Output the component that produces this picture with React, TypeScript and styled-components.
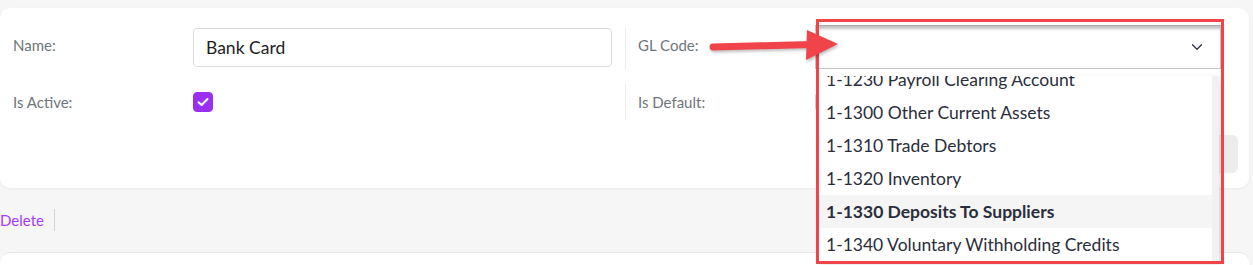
import React from 'react'
import styled, { createGlobalStyle } from 'styled-components'
import { ChevronDown } from 'lucide-react'

const GlobalStyle = createGlobalStyle`
  html, body {
    margin: 0;
    padding: 0;
    background: #f6f6f6;
    font-family: Lato, "Open Sans", Arial, sans-serif;
  }
`

const Page = styled.div`
  position: relative;
  width: 1253px;
  height: 265px;
  overflow: hidden;
  padding-top: 8px;
  box-sizing: border-box;
`

const Card = styled.div`
  width: 1249px;
  box-sizing: border-box;
  background: #fff;
  border-radius: 10px;
  box-shadow: 0 1px 3px rgba(0, 0, 0, 0.06);
  padding: 20px 0 15px;
  display: flex;
  flex-direction: column;
`

const FormGrid = styled.div`
  display: grid;
  grid-template-columns: 625px 1fr;
  grid-template-rows: 42px 36px;
  row-gap: 14px;
`

const Field = styled.div<{ $divider?: boolean; $center?: boolean }>`
  display: flex;
  align-items: ${(p) => (p.$center ? 'center' : 'flex-start')};
  padding-left: ${(p) => (p.$divider ? '12px' : '13px')};
  padding-right: 13px;
  border-left: ${(p) => (p.$divider ? '1px solid #ececec' : 'none')};
  position: relative;
`

const Label = styled.label`
  width: 180px;
  flex-shrink: 0;
  font-size: 15px;
  line-height: 34px;
  color: #6f757c;
`

const TextInput = styled.div`
  width: 419px;
  height: 39px;
  box-sizing: border-box;
  border: 1px solid #dcdcdc;
  border-radius: 4px;
  padding: 0 12px;
  display: flex;
  align-items: center;
  font-size: 17.5px;
  color: #1d1f24;
`

const Checkbox = styled.div<{ $checked?: boolean }>`
  width: 20px;
  height: 20px;
  border-radius: 4px;
  box-sizing: border-box;
  background: ${(p) => (p.$checked ? '#9a2ff0' : '#fff')};
  border: 1px solid ${(p) => (p.$checked ? '#9a2ff0' : '#cfcfcf')};
  display: flex;
  align-items: center;
  justify-content: center;
  margin-left: ${(p) => (p.$checked ? '0' : '-3px')};
`

const SelectWrap = styled.div`
  position: relative;
  width: 406px;
  margin-top: -3px;
  margin-left: -3px;
  z-index: 5;
`

const SelectBox = styled.div`
  height: 44px;
  box-sizing: border-box;
  background: #fff;
  border: 1px solid #c4c4c4;
  border-top-color: #a8a8a8;
  box-shadow: inset 0 5px 3px -2px rgba(0, 0, 0, 0.24);
  display: flex;
  align-items: center;
  justify-content: flex-end;
  padding-right: 14px;
  color: #2b3040;
`

const DropList = styled.div`
  position: absolute;
  top: calc(100% + 7px);
  left: 3px;
  right: 2px;
  height: 186px;
  background: #fff;
  overflow: hidden;
  display: flex;
  box-shadow: 2px 3px 6px rgba(0, 0, 0, 0.12);
`

const Items = styled.div`
  flex: 1;
  margin-top: -13px;
`

const ScrollTrack = styled.div`
  width: 7px;
  background: #f1f1f1;
`

const Item = styled.div<{ $active?: boolean }>`
  height: 33px;
  display: flex;
  align-items: center;
  padding-left: 8px;
  font-size: 17.5px;
  color: #2a2e3b;
  font-weight: ${(p) => (p.$active ? 700 : 400)};
  background: ${(p) => (p.$active ? '#f5f5f5' : '#fff')};
  white-space: nowrap;
`

const Footer = styled.div`
  display: flex;
  justify-content: flex-end;
  padding-right: 11px;
  margin-top: 15px;
`

const SaveButton = styled.button`
  height: 38px;
  width: 90px;
  border: none;
  border-radius: 6px;
  background: #ececec;
  color: #555;
  font-family: inherit;
  font-size: 15px;
`

const ActionBar = styled.div`
  display: flex;
  align-items: center;
  height: 24px;
  margin-top: 20px;
`

const LinkButton = styled.span`
  font-size: 15px;
  color: #a63bf7;
  padding-right: 10px;
  border-right: 1px solid #d2d2d2;
  line-height: 22px;
`

const NextCard = styled.div`
  margin-top: 20px;
  width: 1249px;
  height: 40px;
  background: #fff;
  border-radius: 10px;
  border-top: 1px solid #e6e6e6;
`

const Highlight = styled.div`
  position: absolute;
  left: 816px;
  top: 19px;
  width: 408px;
  height: 245px;
  box-sizing: border-box;
  border: 3px solid #f1444a;
  z-index: 10;
  pointer-events: none;
`

const ArrowSvg = styled.svg`
  position: absolute;
  left: 700px;
  top: 22px;
  z-index: 11;
  overflow: visible;
  filter: drop-shadow(1px 2px 1.5px rgba(0, 0, 0, 0.25));
`

const accounts = [
  '1-1230 Payroll Clearing Account',
  '1-1300 Other Current Assets',
  '1-1310 Trade Debtors',
  '1-1320 Inventory',
  '1-1330 Deposits To Suppliers',
  '1-1340 Voluntary Withholding Credits',
]

export default function App() {
  return (
    <>
      <GlobalStyle />
      <Page>
        <Card>
          <FormGrid>
            <Field>
              <Label>Name:</Label>
              <TextInput>Bank Card</TextInput>
            </Field>
            <Field $divider>
              <Label>GL Code:</Label>
              <SelectWrap>
                <SelectBox>
                  <ChevronDown size={18} strokeWidth={1.6} />
                </SelectBox>
                <DropList>
                  <Items>
                    {accounts.map((a) => (
                      <Item key={a} $active={a.startsWith('1-1330')}>
                        {a}
                      </Item>
                    ))}
                  </Items>
                  <ScrollTrack />
                </DropList>
              </SelectWrap>
            </Field>
            <Field $center>
              <Label>Is Active:</Label>
              <Checkbox $checked>
                <svg width="12" height="10" viewBox="0 0 12 10">
                  <path d="M1.5 5.2 L4.6 8 L10.5 2" fill="none" stroke="#fff" strokeWidth="2" strokeLinecap="round" strokeLinejoin="round" />
                </svg>
              </Checkbox>
            </Field>
            <Field $divider $center>
              <Label>Is Default:</Label>
              <Checkbox />
            </Field>
          </FormGrid>
          <Footer>
            <SaveButton>Save</SaveButton>
          </Footer>
        </Card>
        <ActionBar>
          <LinkButton>Delete</LinkButton>
        </ActionBar>
        <NextCard />

        <Highlight />
        <ArrowSvg width="145" height="45" viewBox="0 0 145 45">
          <line x1="13" y1="25" x2="112" y2="22.5" stroke="#f1444a" strokeWidth="7" strokeLinecap="round" />
          <polygon points="107,8 138,22 106,38" fill="#f1444a" />
        </ArrowSvg>
      </Page>
    </>
  )
}
